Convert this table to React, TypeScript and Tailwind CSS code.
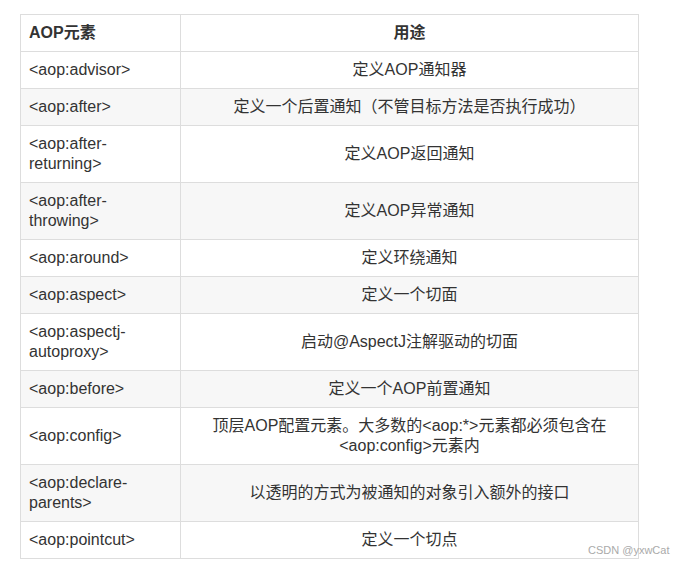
const rows: [string, string][] = [
  ["<aop:advisor>", "定义AOP通知器"],
  ["<aop:after>", "定义一个后置通知（不管目标方法是否执行成功）"],
  ["<aop:after-returning>", "定义AOP返回通知"],
  ["<aop:after-throwing>", "定义AOP异常通知"],
  ["<aop:around>", "定义环绕通知"],
  ["<aop:aspect>", "定义一个切面"],
  ["<aop:aspectj-autoproxy>", "启动@AspectJ注解驱动的切面"],
  ["<aop:before>", "定义一个AOP前置通知"],
  ["<aop:config>", "顶层AOP配置元素。大多数的<aop:*>元素都必须包含在<aop:config>元素内"],
  ["<aop:declare-parents>", "以透明的方式为被通知的对象引入额外的接口"],
  ["<aop:pointcut>", "定义一个切点"],
];

export default function App() {
  return (
    <div
      className="relative w-[682px] h-[568px] bg-white text-[#333] text-[16px] leading-[20px]"
      style={{ fontFamily: '"Liberation Sans", Arial, "Noto Sans CJK SC", sans-serif' }}
    >
      <div className="pt-[14px] pl-[20px]">
        <table className="w-[619px] table-fixed border-collapse">
          <colgroup>
            <col className="w-[160px]" />
            <col />
          </colgroup>
          <thead>
            <tr>
              <th className="border border-[#ddd] px-2 py-2 text-left font-bold">AOP元素</th>
              <th className="border border-[#ddd] px-2 py-2 text-center font-bold">用途</th>
            </tr>
          </thead>
          <tbody>
            {rows.map(([el, use], i) => (
              <tr key={el} className={i % 2 === 1 ? "bg-[#f7f7f7]" : "bg-white"}>
                <td className="border border-[#ddd] px-2 py-2 text-left break-words">{el}</td>
                <td className="border border-[#ddd] px-2 py-2 text-center">{use}</td>
              </tr>
            ))}
          </tbody>
        </table>
      </div>
      {/* watermark */}
      <div className="absolute left-[588px] top-[543px] text-[11px] leading-[14px] text-[#aaa]">
        CSDN @yxwCat
      </div>
    </div>
  );
}
